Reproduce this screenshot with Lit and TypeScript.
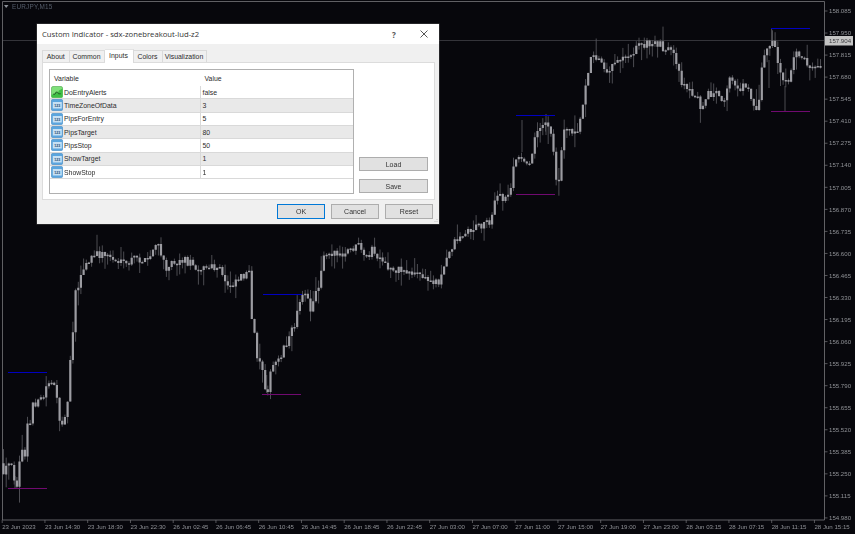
import { LitElement, html, css, svg } from "lit";
import { customElement } from "lit/decorators.js";

const PATH: number[][] = [
  [2,434],[3.5,478],[6,470],[10,463],[15,480],[17,483],[20,453],[26,455],[27,425],[30,427],[32,402],[38,403],[45,395],[47,382],[52,380],[55,385],[58,412],[60,428],[64,415],[66,410],[69,398],[70,360],[72,345],[75,292],[80,280],[85,266],[95,255],[105,254],[115,260],[125,266],[135,258],[145,262],[150,258],[155,244],[160,250],[165,268],[170,262],[185,260],[200,268],[210,268],[220,270],[225,282],[230,285],[240,276],[249,272],[252,326],[255,336],[258,362],[262,365],[265,385],[268,388],[272,368],[280,356],[285,345],[295,325],[298,302],[303,292],[306,297],[312,313],[315,290],[320,285],[322,256],[325,252],[335,252],[340,258],[345,255],[350,250],[358,246],[365,260],[372,250],[380,262],[388,268],[400,270],[412,272],[420,275],[430,282],[440,280],[450,250],[455,240],[470,230],[480,225],[490,220],[497,196],[505,200],[510,190],[515,160],[520,158],[528,160],[530,170],[533,146],[538,125],[545,125],[550,130],[553,150],[556,176],[560,180],[563,125],[570,130],[578,128],[582,112],[585,85],[590,60],[600,55],[605,68],[610,70],[615,60],[625,55],[635,50],[640,43],[650,45],[660,42],[665,50],[672,52],[680,78],[685,88],[695,95],[700,105],[708,95],[715,92],[722,106],[730,80],[740,88],[748,85],[755,110],[758,108],[762,65],[768,45],[775,45],[778,62],[782,80],[787,85],[790,80],[795,50],[802,55],[810,65],[818,62],[824,80],
];

const LONG_WICKS = [[15,476,488],[266.7,375,393],[771.6,28,46],[769,60,88],[785,86,111],[522,120,152],[546,114,135]];

function yAt(x: number): number {
  for (let i = 1; i < PATH.length; i++) {
    if (x <= PATH[i][0]) {
      const [x0, y0] = PATH[i - 1];
      const [x1, y1] = PATH[i];
      return y0 + ((y1 - y0) * (x - x0)) / (x1 - x0 || 1);
    }
  }
  return PATH[PATH.length - 1][1];
}

function buildCandles() {
  let seed = 12345;
  const rnd = () => {
    seed = (seed * 16807) % 2147483647;
    return seed / 2147483647;
  };
  let bodies = "";
  let wicks = LONG_WICKS.map(([x, a, b]) => `M${x} ${a}V${b}`).join("");
  let prev = yAt(3);
  for (let x = 3.5; x < 823; x += 2.67) {
    const close = yAt(x) + (rnd() - 0.5) * 9;
    const top = Math.min(prev, close);
    const bottom = Math.max(prev, close);
    const h = Math.max(bottom - top, 1.5);
    const hi = top - rnd() * rnd() * 18;
    const lo = bottom + rnd() * rnd() * 18;
    wicks += `M${x.toFixed(1)} ${hi.toFixed(1)}V${lo.toFixed(1)}`;
    bodies += `M${(x - 1.1).toFixed(1)} ${top.toFixed(1)}h2.2v${h.toFixed(1)}h-2.2z`;
    prev = close;
  }
  return { bodies, wicks };
}

const PRICES = ["158.085","157.950","157.815","157.680","157.545","157.410","157.275","157.140","157.005","156.870","156.735","156.600","156.465","156.330","156.195","156.060","155.925","155.790","155.655","155.520","155.385","155.250","155.115","154.980"];
const TIMES = ["23 Jun 2023","23 Jun 14:30","23 Jun 18:30","23 Jun 22:30","26 Jun 02:45","26 Jun 06:45","26 Jun 10:45","26 Jun 14:45","26 Jun 18:45","26 Jun 22:45","27 Jun 03:00","27 Jun 07:00","27 Jun 11:00","27 Jun 15:00","27 Jun 19:00","27 Jun 23:00","28 Jun 03:15","28 Jun 07:15","28 Jun 11:15","28 Jun 15:15"];
const BLUE = [[8,47,372.5],[263,302,294.5],[516,555,115.5],[771,810,28.5]];
const PURPLE = [[8,47,488.5],[262,301,394.5],[516,555,194.5],[771,810,111.5]];
const ROWS: [string, string, boolean][] = [
  ["DoEntryAlerts","false",true],["TimeZoneOfData","3",false],["PipsForEntry","5",false],["PipsTarget","80",false],["PipsStop","50",false],["ShowTarget","1",false],["ShowStop","1",false],
];
const TABS = ["About","Common","Inputs","Colors","Visualization"];

@customElement("app-root")
export class AppRoot extends LitElement {
  static styles = css`
    :host { display: block; position: relative; width: 855px; height: 534px; background: #07070c; overflow: hidden; font-family: "Liberation Sans", Arial, sans-serif; }
    .chart { display: block; width: 855px; height: 534px; filter: blur(0.3px); }
    .axis { font: 6.1px "Liberation Sans", Arial, sans-serif; fill: #8f9196; }
    .symbol { font: 6.4px "Liberation Sans", Arial, sans-serif; fill: #565e6c; letter-spacing: 0.03em; }
    .bid { font: 6.1px "Liberation Sans", Arial, sans-serif; fill: #3c3c40; }

    .dialog { position: absolute; left: 37px; top: 24px; width: 402px; height: 200px; box-sizing: border-box; background: #f0f0f0; display: flex; flex-direction: column; color: #2c2c2c; font-size: 6.9px; box-shadow: 0 0 0 0.5px #444; filter: blur(0.25px); }
    .title { height: 20px; flex: none; background: #fff; display: flex; align-items: center; padding: 0 0 0 5px; font: 7.7px "Open Sans", sans-serif; color: #333; }
    .title span.t { flex: 1; }
    .help { width: 30px; text-align: center; font: bold 8px "Open Sans", sans-serif; color: #555; }
    .close { width: 30px; display: flex; justify-content: center; }
    .close svg { display: block; width: 8px; height: 8px; }
    .tabs { display: flex; padding: 5px 0 0 5px; height: 18px; box-sizing: border-box; flex: none; align-items: flex-end; position: relative; z-index: 1; }
    .tab { height: 12px; box-sizing: border-box; border: 1px solid #dadada; border-left-width: 0; border-bottom: 0; display: flex; align-items: center; justify-content: center; background: #f0f0f0; }
    .tab:first-child { border-left-width: 1px; }
    .tab.active { height: 14px; background: #fff; margin-bottom: -1px; padding-bottom: 2px; border-top-color: #e4e4e4; }
    .panel { margin: 0 4px 0 5px; height: 138px; box-sizing: border-box; background: #fff; border: 1px solid #dcdcdc; padding: 6px 6px 5px 6px; display: flex; gap: 5px; flex: none; }
    .list { width: 305px; height: 125px; box-sizing: border-box; border: 1px solid #b0b0b0; background: #fff; display: flex; flex-direction: column; }
    .row { display: grid; grid-template-columns: 150.5px 1fr; height: 13.33px; box-sizing: border-box; border-bottom: 1px solid #d9d9d9; align-items: center; flex: none; }
    .row.head { height: 16px; border-bottom: 0; }
    .row.alt { background: #e9e9e9; }
    .cell { display: flex; align-items: center; height: 100%; box-sizing: border-box; min-width: 0; white-space: nowrap; }
    .cell.name { gap: 1px; padding-left: 1px; border-right: 1px solid #d9d9d9; }
    .head .cell.name { padding-left: 4px; border-right: 0; }
    .cell.val { padding-left: 2px; }
    .head .cell.val { padding-left: 4px; }
    .icon { width: 12px; height: 12px; flex: none; display: block; }
    .num { font: bold 3.6px "Liberation Sans", sans-serif; fill: #17456e; }
    .side { width: 69px; display: flex; flex-direction: column; justify-content: flex-end; gap: 8px; padding-bottom: 1px; }
    .btn { height: 14px; box-sizing: border-box; background: #e1e1e1; border: 1px solid #adadad; display: flex; align-items: center; justify-content: center; color: #333; font-size: 7px; }
    .footer { flex: 1; display: flex; justify-content: flex-end; gap: 6px; padding: 4px 6px 0 0; position: relative; }
    .footer .btn { width: 48px; height: 14.5px; }
    .btn.primary { border: 1.5px solid #0078d7; }
    .grip { position: absolute; right: 1px; bottom: 1px; width: 5px; height: 5px; }
  `;

  private candles = buildCandles();

  private chart() {
    const { bodies, wicks } = this.candles;
    return html`<svg class="chart" viewBox="0 0 855 534" xmlns="http://www.w3.org/2000/svg">
      <path d="M2.5 520V1.5H824.5V520" fill="none" stroke="#77777b" stroke-width="0.8"></path>
      <path d="M2.5 520H824.5" fill="none" stroke="#77777b" stroke-width="0.8"></path>
      <path d="M3 40.5H824" stroke="#34343a" stroke-width="1"></path>
      <path d=${wicks} stroke="#55555a" stroke-width="0.9" fill="none"></path>
      <path d=${bodies} fill="#9c9ca2"></path>
      ${BLUE.map(([a, b, y]) => svg`<path d="M${a} ${y}H${b}" stroke="#0000c0" stroke-width="1.2"></path>`)}
      ${PURPLE.map(([a, b, y]) => svg`<path d="M${a} ${y}H${b}" stroke="#700a70" stroke-width="1.2"></path>`)}
      ${PRICES.map((p, i) => {
        const y = 11 + i * 22.04;
        return svg`<path d="M824.5 ${y}h3" stroke="#77777b" stroke-width="0.7"></path>
          <text class="axis" x="829" y=${y + 2.2}>${p}</text>`;
      })}
      ${TIMES.map((t, i) => {
        const x = 2.2 + i * 42.75;
        return svg`<path d="M${x} 520v3" stroke="#77777b" stroke-width="0.7"></path>
          <text class="axis" x=${x} y="528.5">${t}</text>`;
      })}
      <rect x="825" y="36" width="28" height="9.5" fill="#c4c4c4"></rect>
      <text class="bid" x="829" y="43">157.904</text>
      <path d="M4 5h4.5L6.2 8z" fill="#8b8f96"></path>
      <text class="symbol" x="12" y="8.5">EURJPY,M15</text>
    </svg>`;
  }

  private icon(green: boolean) {
    if (green) {
      return html`<svg class="icon" viewBox="0 0 12 12">
        <rect x="0.5" y="0.5" width="11" height="11" rx="1.5" fill="#7fe07a" stroke="#4aa548" stroke-width="0.6"></rect>
        <path d="M0.5 8.5L3 8.5L5 5.5L6.5 7.5L8 4.5L11.5 2.5V11.5H0.5Z" fill="#3fbf45"></path>
        <path d="M2 8.2H4L5.3 6H6.4L7.4 7.8H9.8" fill="none" stroke="#1d4d22" stroke-width="0.8"></path>
      </svg>`;
    }
    return html`<svg class="icon" viewBox="0 0 12 12">
      <rect x="0.5" y="0.5" width="11" height="11" rx="1" fill="#5aa5de" stroke="#3d86c2" stroke-width="0.6"></rect>
      <rect x="1.8" y="3" width="9" height="6.5" fill="#c6e0f4"></rect>
      <text class="num" x="6.3" y="7.6" text-anchor="middle">123</text>
    </svg>`;
  }

  private dialog() {
    const widths = [27.5, 35, 29, 29, 44];
    return html`<div class="dialog">
      <div class="title">
        <span class="t">Custom Indicator - sdx-zonebreakout-lud-z2</span>
        <span class="help">?</span>
        <span class="close"><svg viewBox="0 0 8 8"><path d="M0.5 0.5L7.5 7.5M7.5 0.5L0.5 7.5" stroke="#444" stroke-width="0.9" fill="none"></path></svg></span>
      </div>
      <div class="tabs">
        ${TABS.map((t, i) => html`<div class="tab ${t === "Inputs" ? "active" : ""}" style="width:${widths[i]}px">${t}</div>`)}
      </div>
      <div class="panel">
        <div class="list">
          <div class="row head"><div class="cell name">Variable</div><div class="cell val">Value</div></div>
          ${ROWS.map((r, i) => html`<div class="row ${i % 2 ? "alt" : ""}">
            <div class="cell name">${this.icon(r[2])}<span>${r[0]}</span></div>
            <div class="cell val">${r[1]}</div>
          </div>`)}
        </div>
        <div class="side">
          <div class="btn">Load</div>
          <div class="btn">Save</div>
        </div>
      </div>
      <div class="footer">
        <div class="btn primary">OK</div>
        <div class="btn">Cancel</div>
        <div class="btn">Reset</div>
        <svg class="grip" viewBox="0 0 5 5"><path d="M4 1v0.8M4 3v0.8M2 3v0.8" stroke="#b5b5b5" stroke-width="0.9"></path></svg>
      </div>
    </div>`;
  }

  render() {
    return html`${this.chart()}${this.dialog()}`;
  }
}
